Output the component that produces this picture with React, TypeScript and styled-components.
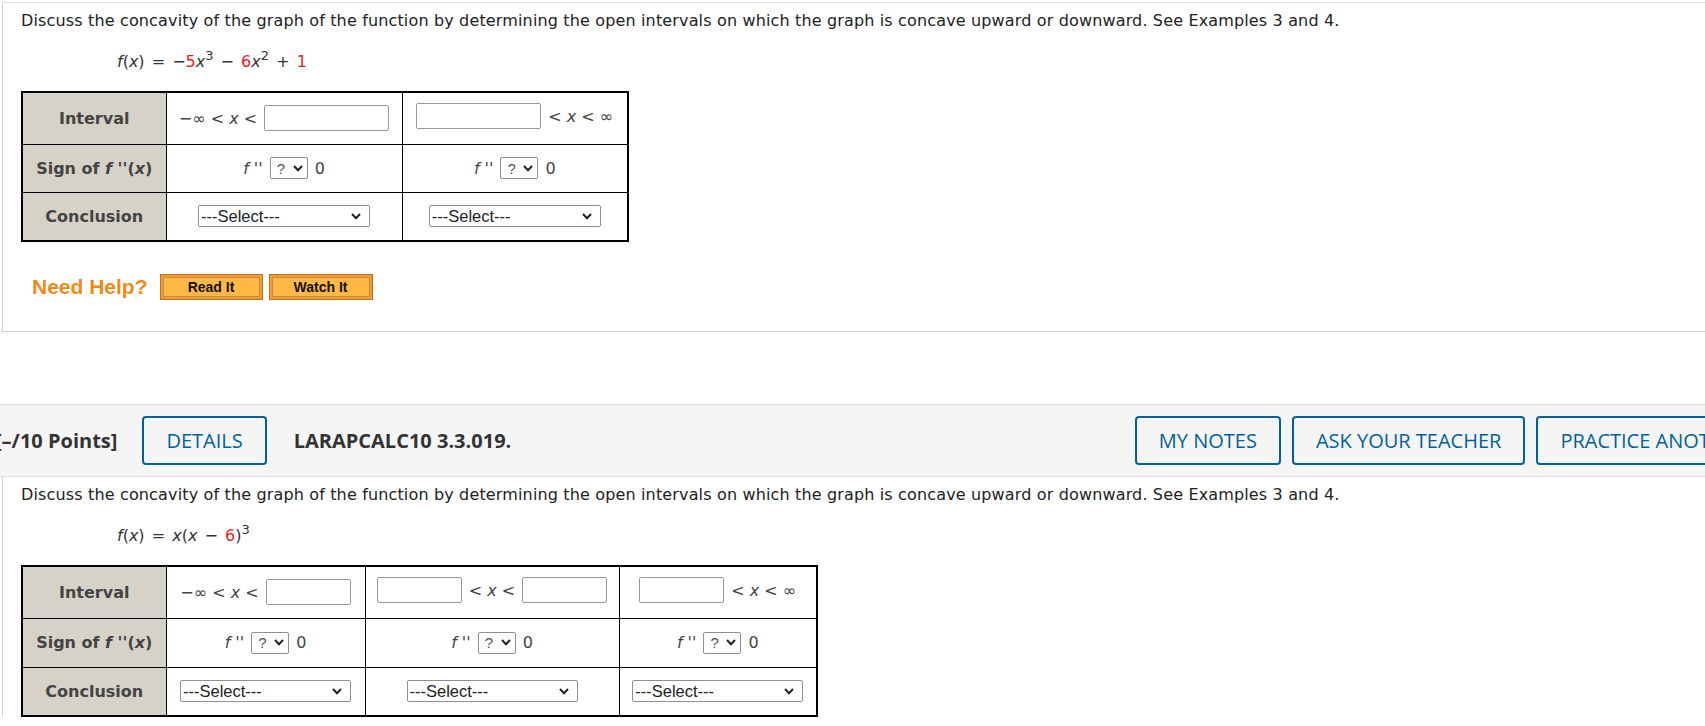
import React from "react";
import styled, { createGlobalStyle } from "styled-components";

const GlobalStyle = createGlobalStyle`
  html, body { margin: 0; padding: 0; background: #fff; overflow: hidden; }
  body { font-family: "DejaVu Sans", Verdana, sans-serif; color: #222; }
`;

const Page = styled.div`
  width: 1800px;
  padding-top: 2px;
`;

const Panel = styled.section<{ $top?: boolean; $bottom?: boolean }>`
  margin-left: 2px;
  border-left: 1px solid #cfcfcf;
  border-top: ${(p) => (p.$top ? "1px solid #e2e2e2" : "none")};
  border-bottom: ${(p) => (p.$bottom ? "1px solid #cfcfcf" : "none")};
  padding: 8px 0 ${(p) => (p.$bottom ? "31px" : "0")} 18px;
`;

const Prompt = styled.p`
  margin: 0;
  font-size: 16px;
  letter-spacing: 0.15px;
  line-height: 20px;
  color: #222;
`;

const Formula = styled.div`
  margin-top: 21px;
  padding-left: 96px;
  font-size: 16px;
  word-spacing: 2px;
  line-height: 20px;
  color: #333;
`;

const Var = styled.i`
  font-style: italic;
`;

const Red = styled.span`
  color: #ec1c1c;
`;

const Sup = styled.sup`
  font-size: 13px;
  line-height: 0;
  vertical-align: 7px;
`;

const Table = styled.table<{ $width: number }>`
  margin-top: 19px;
  border-collapse: collapse;
  table-layout: fixed;
  width: ${(p) => p.$width}px;
  border: 2px solid #000;
`;

const Row = styled.tr<{ $h: number }>`
  height: ${(p) => p.$h}px;
`;

const HeadCell = styled.th`
  background: #d6d2c8;
  border: 1px solid #000;
  font-family: "DejaVu Sans", Verdana, sans-serif;
  font-weight: bold;
  font-size: 16px;
  color: #444;
  text-align: center;
  padding: 0;
`;

const Cell = styled.td`
  border: 1px solid #000;
  text-align: center;
  padding: 0;
  font-size: 16px;
  color: #3c3c3c;
`;

const Inline = styled.span`
  display: inline-flex;
  align-items: center;
  gap: 7px;
  white-space: nowrap;
`;

const MathText = styled.span`
  font-family: "DejaVu Sans", Verdana, sans-serif;
  font-size: 16px;
  color: #444;
`;

const TextBox = styled.span<{ $w: number }>`
  display: inline-block;
  width: ${(p) => p.$w}px;
  height: 26px;
  box-sizing: border-box;
  border: 1px solid #9a9a9a;
  border-radius: 2px;
  background: #fff;
`;

const SelectBox = styled.span<{ $w: number }>`
  display: inline-flex;
  align-items: center;
  justify-content: space-between;
  box-sizing: border-box;
  width: ${(p) => p.$w}px;
  height: 22px;
  padding: 0 8px 0 2px;
  border: 1px solid #8f8f8f;
  border-radius: 2px;
  background: #fff;
  font-family: "Liberation Sans", Arial, sans-serif;
  font-size: 16.5px;
  color: #222;
`;

const SmallSelect = styled(SelectBox)`
  padding: 0 4px 0 6px;
  font-size: 15px;
  color: #555;
`;

const Chevron = () => (
  <svg width="10" height="7" viewBox="0 0 10 7">
    <polyline points="1,1 5,5.2 9,1" fill="none" stroke="#222" strokeWidth="2" />
  </svg>
);

const HelpRow = styled.div`
  margin-top: 32px;
  padding-left: 11px;
  display: flex;
  align-items: center;
  height: 26px;
`;

const HelpLabel = styled.span`
  font-family: "Liberation Sans", Arial, sans-serif;
  font-weight: bold;
  font-size: 21px;
  color: #ef8a17;
  margin-right: 12px;
`;

const HelpButton = styled.span<{ $w: number }>`
  display: inline-flex;
  align-items: center;
  justify-content: center;
  box-sizing: border-box;
  width: ${(p) => p.$w}px;
  height: 26px;
  margin-right: 6px;
  border: 1px solid #b8702a;
  background: #fdb943;
  box-shadow: inset 0 0 0 2px #f59a2d, inset 0 0 0 3px #c98a45;
  font-family: "Liberation Sans", Arial, sans-serif;
  font-weight: bold;
  font-size: 14px;
  color: #111;
`;

const Header = styled.div`
  margin-top: 72px;
  height: 71px;
  border-top: 1px solid #dedede;
  border-bottom: 1px solid #dedede;
  background: #f5f5f5;
  display: flex;
  align-items: center;
  font-family: "Open Sans", sans-serif;
  padding-right: 28px;
`;

const Points = styled.span`
  margin-left: -5px;
  font-weight: bold;
  font-size: 20px;
  color: #333;
  margin-right: 25px;
`;

const Title = styled.span`
  font-weight: bold;
  font-size: 20px;
  color: #333;
  margin-left: 27px;
`;

const OutlineButton = styled.span`
  display: inline-flex;
  align-items: center;
  justify-content: center;
  box-sizing: border-box;
  height: 49px;
  padding: 0 22px;
  border: 2px solid #00629c;
  border-radius: 4px;
  font-size: 20px;
  color: #00629c;
  white-space: nowrap;
`;

const RightGroup = styled.div`
  margin-left: auto;
  display: flex;
  gap: 11px;
`;

type Cols = number[];

const Interval = ({ left, right, w }: { left?: boolean; right?: boolean; w: number }) => {
  if (left)
    return (
      <Inline>
        <MathText>
          −∞ &lt; <Var>x</Var> &lt;
        </MathText>
        <TextBox $w={w} />
      </Inline>
    );
  if (right)
    return (
      <Inline>
        <TextBox $w={w} />
        <MathText>
          &lt; <Var>x</Var> &lt; ∞
        </MathText>
      </Inline>
    );
  return (
    <Inline>
      <TextBox $w={w} />
      <MathText>
        &lt; <Var>x</Var> &lt;
      </MathText>
      <TextBox $w={w} />
    </Inline>
  );
};

const Sign = () => (
  <Inline>
    <MathText>
      <Var>f</Var> ''
    </MathText>
    <SmallSelect $w={38}>
      ? <Chevron />
    </SmallSelect>
    <MathText>0</MathText>
  </Inline>
);

const Conclusion = ({ w }: { w: number }) => (
  <SelectBox $w={w}>
    ---Select--- <Chevron />
  </SelectBox>
);

const ConcavityTable = ({
  cols,
  kinds,
  inputW,
  selectW,
  heights,
}: {
  cols: Cols;
  kinds: ("left" | "mid" | "right")[];
  inputW: number;
  selectW: number;
  heights: number[];
}) => (
  <Table $width={cols.reduce((a, b) => a + b, 0)}>
    <colgroup>
      {cols.map((c, i) => (
        <col key={i} style={{ width: c }} />
      ))}
    </colgroup>
    <tbody>
      <Row $h={heights[0]}>
        <HeadCell>Interval</HeadCell>
        {kinds.map((k, i) => (
          <Cell key={i}>
            <Interval left={k === "left"} right={k === "right"} w={inputW} />
          </Cell>
        ))}
      </Row>
      <Row $h={heights[1]}>
        <HeadCell>
          Sign of <Var>f</Var> ''(<Var>x</Var>)
        </HeadCell>
        {kinds.map((_, i) => (
          <Cell key={i}>
            <Sign />
          </Cell>
        ))}
      </Row>
      <Row $h={heights[2]}>
        <HeadCell>Conclusion</HeadCell>
        {kinds.map((_, i) => (
          <Cell key={i}>
            <Conclusion w={selectW} />
          </Cell>
        ))}
      </Row>
    </tbody>
  </Table>
);

const promptText =
  "Discuss the concavity of the graph of the function by determining the open intervals on which the graph is concave upward or downward. See Examples 3 and 4.";

export default function App() {
  return (
    <Page>
      <GlobalStyle />
      <Panel $top $bottom>
        <Prompt>{promptText}</Prompt>
        <Formula>
          <Var>f</Var>(<Var>x</Var>) = −<Red>5</Red>
          <Var>x</Var>
          <Sup>3</Sup> − <Red>6</Red>
          <Var>x</Var>
          <Sup>2</Sup> + <Red>1</Red>
        </Formula>
        <ConcavityTable
          cols={[144, 236, 226]}
          kinds={["left", "right"]}
          inputW={125}
          selectW={172}
          heights={[52, 48, 49]}
        />
        <HelpRow>
          <HelpLabel>Need Help?</HelpLabel>
          <HelpButton $w={103}>Read It</HelpButton>
          <HelpButton $w={104}>Watch It</HelpButton>
        </HelpRow>
      </Panel>
      <Header>
        <Points>[–/10 Points]</Points>
        <OutlineButton>DETAILS</OutlineButton>
        <Title>LARAPCALC10 3.3.019.</Title>
        <RightGroup>
          <OutlineButton>MY NOTES</OutlineButton>
          <OutlineButton>ASK YOUR TEACHER</OutlineButton>
          <OutlineButton>PRACTICE ANOTHER</OutlineButton>
        </RightGroup>
      </Header>
      <Panel>
        <Prompt>{promptText}</Prompt>
        <Formula>
          <Var>f</Var>(<Var>x</Var>) = <Var>x</Var>(<Var>x</Var> − <Red>6</Red>)<Sup>3</Sup>
        </Formula>
        <ConcavityTable
          cols={[144, 199, 254, 198]}
          kinds={["left", "mid", "right"]}
          inputW={85}
          selectW={171}
          heights={[52, 49, 49]}
        />
      </Panel>
    </Page>
  );
}
